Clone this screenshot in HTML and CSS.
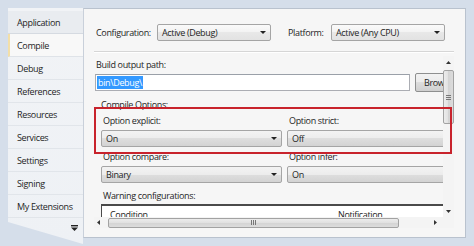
FILE: index.html
```html
<!DOCTYPE html>
<html>
<head>
<meta charset="utf-8">
<link rel="stylesheet" href="styles.css">
</head>
<body>
<div class="window">
  <nav class="tabs">
    <div class="tab">Application</div>
    <div class="tab selected">Compile</div>
    <div class="tab">Debug</div>
    <div class="tab">References</div>
    <div class="tab">Resources</div>
    <div class="tab">Services</div>
    <div class="tab">Settings</div>
    <div class="tab">Signing</div>
    <div class="tab">My Extensions</div>
    <div class="more"><svg width="7" height="6" viewBox="0 0 7 6"><rect x="0" y="0" width="7" height="1.4" fill="#222"/><path d="M0 2.4H7L3.5 6Z" fill="#222"/></svg></div>
  </nav>
  <section class="panel">
    <div class="config-row">
      <span class="label">Configuration:</span>
      <div class="combo config"><span>Active (Debug)</span><i class="arrow"></i></div>
      <span class="label platform">Platform:</span>
      <div class="combo config"><span>Active (Any CPU)</span><i class="arrow"></i></div>
    </div>
    <div class="sep"></div>
    <div class="scroller">
      <div class="viewport">
        <div class="content">
          <div class="label build">Build output path:</div>
          <div class="path-row">
            <div class="textbox"><span class="sel">bin\Debug\</span></div>
            <div class="button">Browse...</div>
          </div>
          <div class="label group">Compile Options:</div>
          <div class="options">
            <div class="opt">
              <div class="label">Option explicit:</div>
              <div class="combo"><span>On</span><i class="arrow"></i></div>
            </div>
            <div class="opt">
              <div class="label">Option strict:</div>
              <div class="combo wide"><span>Off</span><i class="arrow"></i></div>
            </div>
            <div class="opt">
              <div class="label">Option compare:</div>
              <div class="combo"><span>Binary</span><i class="arrow"></i></div>
            </div>
            <div class="opt">
              <div class="label">Option infer:</div>
              <div class="combo wide"><span>On</span><i class="arrow"></i></div>
            </div>
          </div>
          <div class="label warn">Warning configurations:</div>
          <div class="listbox">
            <div class="col cond">Condition</div>
            <div class="col notif">Notification</div>
          </div>
        </div>
      </div>
      <div class="vscroll">
        <svg class="sa" width="5" height="3" viewBox="0 0 5 3"><path d="M0 3H5L2.5 0Z" fill="#333"/></svg>
        <div class="vthumb"><svg width="5" height="5" viewBox="0 0 5 5"><path d="M0 .5H5M0 2.5H5M0 4.5H5" stroke="#777" stroke-width="1"/></svg></div>
        <div class="vtrack"></div>
        <svg class="sa" width="5" height="3" viewBox="0 0 5 3"><path d="M0 0H5L2.5 3Z" fill="#333"/></svg>
      </div>
      <div class="hscroll">
        <svg class="sa" width="3" height="5" viewBox="0 0 3 5"><path d="M3 0V5L0 2.5Z" fill="#333"/></svg>
        <div class="hthumb"><svg width="5" height="5" viewBox="0 0 5 5"><path d="M.5 0V5M2.5 0V5M4.5 0V5" stroke="#777" stroke-width="1"/></svg></div>
        <div class="htrack"></div>
        <svg class="sa" width="3" height="5" viewBox="0 0 3 5"><path d="M0 0V5L3 2.5Z" fill="#333"/></svg>
      </div>
      <div class="corner"></div>
    </div>
    <div class="highlight"></div>
  </section>
</div>
</body>
</html>
```

FILE: styles.css
```css
* { box-sizing: border-box; }
html, body { margin: 0; padding: 0; }
body {
  width: 474px;
  height: 246px;
  overflow: hidden;
  background: #d5deea;
  font-family: "Open Sans", "Noto Sans", sans-serif;
  font-size: 9px;
  letter-spacing: -0.35px;
  color: #1e1e1e;
}
.window {
  display: flex;
  padding: 8px 0 0 8px;
  height: 246px;
}
.tabs {
  width: 75px;
  height: 238px;
  padding-top: 3px;
  background: linear-gradient(#f1f3f6, #eef1f5);
  clip-path: polygon(0 0, 100% 0, 100% 236px, 0 214px);
  display: flex;
  flex-direction: column;
  position: relative;
  z-index: 1;
}
.tab {
  height: 23px;
  line-height: 24px;
  padding-left: 9px;
  border-bottom: 1px solid #e1e5ea;
  color: #1e1e1e;
  white-space: nowrap;
}
.tab:first-child {
  background: #e9ecf0;
  border-bottom-color: #d5dae1;
}
.tab.selected {
  background: #f8f8f8;
  border-left: 2px solid #f3dfa8;
  padding-left: 7px;
  margin-right: -1px;
  border-bottom-color: #dfe3e8;
}
.more {
  display: flex;
  justify-content: flex-end;
  padding: 7px 5px 0 0;
}
.panel {
  position: relative;
  width: 383px;
  height: 230px;
  background: #f6f6f6;
  border: 1px solid #b9c2ce;
  border-left-color: #c9d0da;
  padding: 0 11px 0 10px;
  display: flex;
  flex-direction: column;
}
.config-row {
  display: flex;
  align-items: center;
  margin-top: 14px;
  height: 18px;
  padding-left: 2px;
}
.label { white-space: nowrap; }
.config-row .label { width: 61px; }
.config-row .platform { margin-left: 17px; width: 43px; }
.combo {
  position: relative;
  height: 17px;
  border: 1px solid #a5a5a5;
  border-radius: 2px;
  background: linear-gradient(#f3f3f3, #ececec 50%, #dedede 50%, #d3d3d3);
  display: flex;
  align-items: center;
  padding-left: 4px;
}
.combo.config {
  width: 114px;
  background: linear-gradient(#fafafa, #f2f2f2 50%, #e8e8e8 50%, #e2e2e2);
}
.arrow {
  position: absolute;
  right: 4px;
  top: 6px;
  width: 0;
  height: 0;
  border-left: 3px solid transparent;
  border-right: 3px solid transparent;
  border-top: 3px solid #222;
}
.sep {
  margin-top: 10px;
  background: #d6d6d6;
  border-bottom: 1px solid #fff;
  height: 2px;
}
.scroller {
  margin-top: 3px;
  width: 360px;
  display: grid;
  grid-template-columns: 349px 11px;
  grid-template-rows: 161px 11px;
}
.viewport {
  overflow: hidden;
  position: relative;
}
.content {
  width: 380px;
  padding-left: 1px;
}
.build { margin-top: 3px; height: 12px; line-height: 12px; padding-left: 1px; }
.path-row {
  display: flex;
  align-items: center;
  margin-top: 2px;
  height: 19px;
}
.textbox {
  width: 315px;
  height: 17px;
  background: #fff;
  border: 1px solid #abadb3;
  border-top-color: #9aa0a8;
  padding: 1px 1px;
}
.sel {
  display: inline-block;
  background: #3399ff;
  color: #fff;
  height: 13px;
  line-height: 13px;
  padding: 0 1px;
}
.button {
  margin-left: 5px;
  width: 48px;
  height: 19px;
  border: 1px solid #8e8f8f;
  border-radius: 2px;
  background: linear-gradient(#f2f2f2, #ebebeb 50%, #dddddd 50%, #cfcfcf);
  line-height: 17px;
  padding-left: 8px;
  white-space: nowrap;
  overflow: hidden;
}
.group { margin-top: 7px; padding-left: 6px; height: 12px; line-height: 12px; }
.options {
  display: grid;
  grid-template-columns: 181px 170px;
  column-gap: 5px;
  padding-left: 6px;
  row-gap: 4px;
  margin-top: 4px;
}
.opt .label { padding-left: 2px; height: 12px; line-height: 12px; margin-bottom: 3px; }
.warn { margin-top: 7px; padding-left: 8px; height: 12px; line-height: 12px; }
.listbox {
  margin: 2px 0 0 6px;
  width: 360px;
  height: 20px;
  background: #fff;
  border: 1px solid #4a4a4a;
  border-top-width: 2px;
  display: flex;
  padding-top: 2px;
}
.col { height: 14px; line-height: 14px; }
.cond { padding-left: 8px; width: 236px; }
.vscroll {
  background: #f4f4f4;
  display: flex;
  flex-direction: column;
  align-items: center;
  padding-top: 4px;
}
.vscroll .sa { margin: 1px 0 6px; }
.vthumb {
  width: 11px;
  height: 54px;
  border: 1px solid #a2a2a2;
  border-radius: 2px;
  background: linear-gradient(90deg, #ececec, #e0e0e0 50%, #d4d4d4 50%, #dcdcdc);
  display: flex;
  align-items: center;
  justify-content: center;
}
.vtrack { flex: 1; }
.vscroll .sa:last-child { margin: 0 0 4px; }
.hscroll {
  background: #f4f4f4;
  display: flex;
  align-items: center;
  padding-left: 3px;
}
.hscroll .sa { margin-right: 8px; }
.hthumb {
  width: 291px;
  height: 10px;
  border: 1px solid #a2a2a2;
  border-radius: 2px;
  background: linear-gradient(#ececec, #e0e0e0 50%, #d4d4d4 50%, #dcdcdc);
  display: flex;
  align-items: center;
  justify-content: center;
}
.htrack { flex: 1; }
.hscroll .sa:last-child { margin: 0 6px 0 0; }
.corner { background: #f4f4f4; }
.highlight {
  position: absolute;
  left: 10px;
  top: 98px;
  width: 358px;
  height: 47px;
  border: 2px solid #c8232c;
  pointer-events: none;
}
```
